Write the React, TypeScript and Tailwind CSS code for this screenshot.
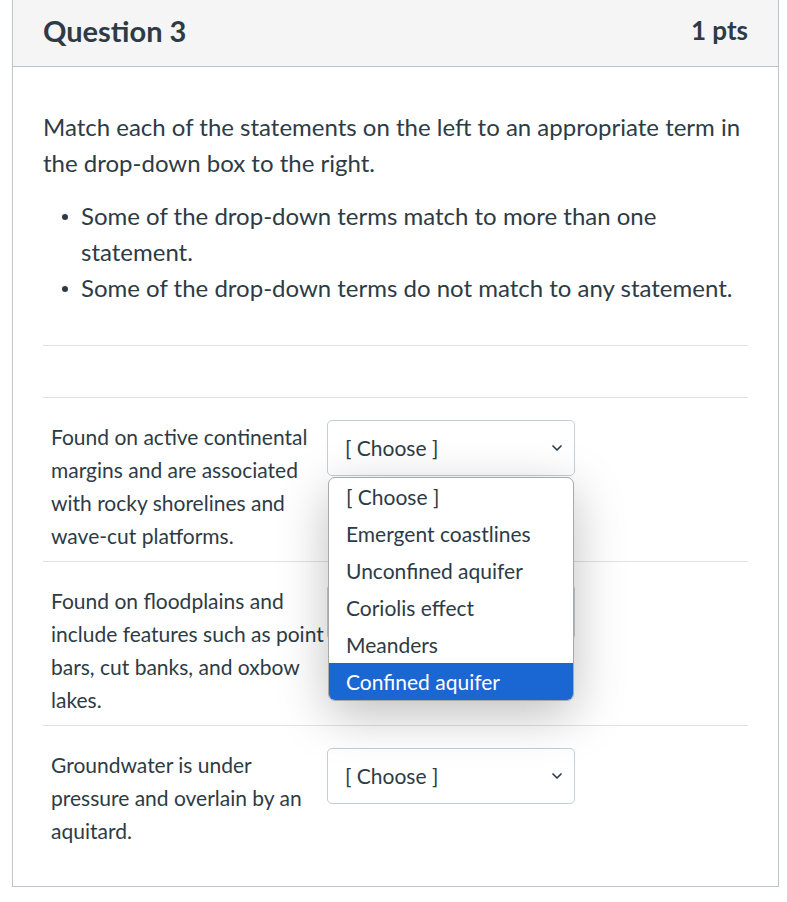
import { ChevronDown } from 'lucide-react';

const rows = [
  'Found on active continental margins and are associated with rocky shorelines and wave-cut platforms.',
  'Found on floodplains and include features such as point bars, cut banks, and oxbow lakes.',
  'Groundwater is under pressure and overlain by an aquitard.',
];

const options = [
  '[ Choose ]',
  'Emergent coastlines',
  'Unconfined aquifer',
  'Coriolis effect',
  'Meanders',
  'Confined aquifer',
];

function SelectBox({ open }: { open?: boolean }) {
  return (
    <div className="relative w-[248px] shrink-0">
      <div className="h-[56px] flex items-center justify-between pl-[17px] pr-[9px] bg-white border border-[#c7cdd1] rounded-[5px] text-[21px]">
        <span>[ Choose ]</span>
        <ChevronDown className="w-[16px] h-[16px]" strokeWidth={2.5} />
      </div>
      {open && (
        <div className="absolute z-10 left-[1px] top-[57px] w-[246px] bg-white border border-[#a9a9a9] rounded-[7px] overflow-hidden shadow-[0_14px_50px_rgba(0,0,0,0.25)]">
          {options.map((o, i) => (
            <div
              key={o}
              className={
                i === options.length - 1
                  ? 'h-[37px] flex items-center pl-[17px] text-[21px] bg-[#1a66d3] text-white'
                  : 'h-[37px] flex items-center pl-[17px] text-[21px]'
              }
            >
              {o}
            </div>
          ))}
        </div>
      )}
    </div>
  );
}

function Bullet({ children }: { children: React.ReactNode }) {
  return (
    <div className="flex">
      <span className="w-[38px] shrink-0 flex items-start justify-end pr-[13px] pt-[16px]">
        <span className="w-[6px] h-[6px] rounded-full bg-[#2d3b45]" />
      </span>
      <span>{children}</span>
    </div>
  );
}

export default function App() {
  return (
    <div className="min-h-screen bg-white font-['Lato','Noto_Sans',sans-serif] text-[#2d3b45]">
      <div className="mx-[12px] w-[767px] border-x border-b border-[#bfc4c8]">
        <div className="h-[67px] bg-[#f5f5f5] border-b border-[#bfc4c8] flex items-center justify-between px-[30px] pb-[5px]">
          <h2 className="text-[29px] font-bold">Question 3</h2>
          <span className="text-[26px] font-bold">1 pts</span>
        </div>

        <div className="px-[30px] pt-[42px] pb-[39px]">
          <p className="text-[24px] leading-[36px]">
            Match each of the statements on the left to an appropriate term in the drop-down box to the right.
          </p>
          <div className="mt-[17px] text-[24px] leading-[36px]">
            <Bullet>Some of the drop-down terms match to more than one statement.</Bullet>
            <Bullet>Some of the drop-down terms do not match to any statement.</Bullet>
          </div>

          <div className="mt-[39px] border-t border-[#dfe2e4]" />

          <div className="mt-[51px]">
            {rows.map((r, i) => (
              <div
                key={i}
                className={
                  i === rows.length - 1
                    ? 'flex items-start border-t border-[#dfe2e4] pl-[8px] pt-[22px]'
                    : 'flex items-start border-t border-[#dfe2e4] pl-[8px] pt-[22px] pb-[9px]'
                }
              >
                <p className="w-[276px] shrink-0 text-[21px] leading-[33px]">{r}</p>
                <SelectBox open={i === 0} />
              </div>
            ))}
          </div>
        </div>
      </div>
    </div>
  );
}
